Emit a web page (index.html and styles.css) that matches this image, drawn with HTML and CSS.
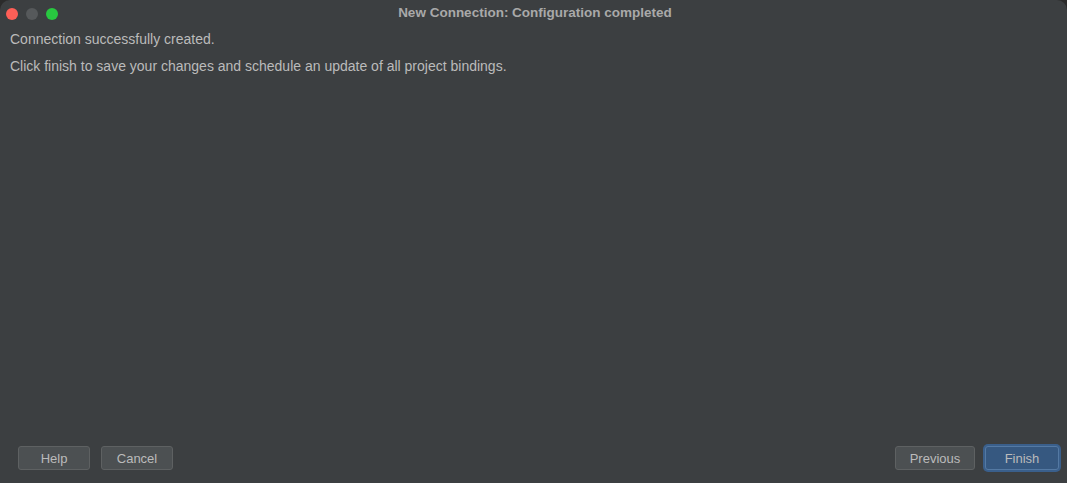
FILE: index.html
```html
<!DOCTYPE html>
<html>
<head>
<meta charset="utf-8">
<link rel="stylesheet" href="styles.css">
</head>
<body>
<div class="window">
  <div class="titlebar">
    <div class="lights">
      <span class="light red"></span>
      <span class="light gray"></span>
      <span class="light green"></span>
    </div>
    <div class="title">New Connection: Configuration completed</div>
  </div>
  <div class="content">
    <p class="line">Connection successfully created.</p>
    <p class="line">Click finish to save your changes and schedule an update of all project bindings.</p>
  </div>
  <div class="footer">
    <div class="group">
      <button class="btn btn-help">Help</button>
      <button class="btn btn-cancel">Cancel</button>
    </div>
    <div class="group">
      <button class="btn btn-prev">Previous</button>
      <button class="btn btn-finish">Finish</button>
    </div>
  </div>
</div>
</body>
</html>
```
FILE: styles.css
```css
* { box-sizing: border-box; }
html, body {
  margin: 0;
  padding: 0;
  width: 1067px;
  height: 483px;
  background: #2b2b2b;
  overflow: hidden;
}
.window {
  width: 1067px;
  height: 483px;
  background: #3c3f41;
  border-radius: 10px 10px 0 0;
  display: flex;
  flex-direction: column;
  font-family: "Liberation Sans", Arial, sans-serif;
  color: #bbbbbb;
}
.titlebar {
  height: 26px;
  display: flex;
  align-items: center;
  position: relative;
}
.lights {
  display: flex;
  gap: 8px;
  padding-left: 6px;
  padding-top: 1px;
}
.light {
  width: 12px;
  height: 12px;
  border-radius: 50%;
  display: block;
}
.red { background: #fe5f57; }
.gray { background: #56595b; }
.green { background: #28c840; }
.title {
  position: absolute;
  left: 0;
  right: 0;
  top: 5px;
  text-align: center;
  font-weight: bold;
  font-size: 13.5px;
  color: #a9a9a9;
  padding-left: 3px;
}
.content {
  flex: 1;
  padding: 5px 10px 0;
}
.line {
  margin: 0 0 11px;
  font-size: 14px;
  line-height: 16px;
}
.footer {
  display: flex;
  justify-content: space-between;
  padding: 0 8px 13px 18px;
}
.group {
  display: flex;
  gap: 11px;
}
.group + .group { gap: 10px; }
.btn {
  height: 24px;
  border: 1px solid #5e6162;
  border-radius: 3px;
  background: #4c5052;
  color: #bbbbbb;
  font-family: "Liberation Sans", Arial, sans-serif;
  font-size: 13px;
  padding: 0;
}
.btn-help, .btn-cancel { width: 72px; }
.btn-prev { width: 80px; }
.btn-finish {
  width: 74px;
  background: #365880;
  border: 1px solid #5479a3;
  box-shadow: 0 0 0 2px #3a5f8b;
  border-radius: 3px;
}
```
